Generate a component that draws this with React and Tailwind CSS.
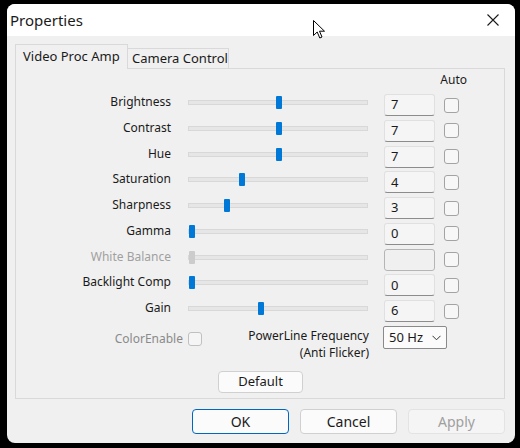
import { useState } from 'react'

const controles = [
  { nombre: 'Brightness', valor: '7', pos: 0.5 },
  { nombre: 'Contrast', valor: '7', pos: 0.5 },
  { nombre: 'Hue', valor: '7', pos: 0.5 },
  { nombre: 'Saturation', valor: '4', pos: 0.287 },
  { nombre: 'Sharpness', valor: '3', pos: 0.2 },
  { nombre: 'Gamma', valor: '0', pos: 0 },
  { nombre: 'White Balance', valor: '', pos: 0, disabled: true },
  { nombre: 'Backlight Comp', valor: '0', pos: 0 },
  { nombre: 'Gain', valor: '6', pos: 0.4 },
]

function Checkbox({ className = '' }) {
  return (
    <div className={`w-[15px] h-[15px] rounded-[3px] border border-[#a3a3a3] bg-[#f7f7f7] ${className}`}></div>
  )
}

function Fila({ control }) {
  const { nombre, valor, pos, disabled } = control
  return (
    <div className="flex items-center h-[22px]">
      <div className={`w-[155px] text-right text-[12px] leading-[16px] mb-[6px] ${disabled ? 'text-[#a0a0a0]' : 'text-[#1a1a1a]'}`}>
        {nombre}
      </div>
      <div className="ml-[17px] w-[180px] mb-[5px] relative h-[5px] bg-[#e6e6e6] border border-[#d8d8d8]">
        <div
          className={`absolute top-[-5px] w-[6px] h-[13px] rounded-[1px] ${disabled ? 'bg-[#cccccc]' : 'bg-[#0078d7]'}`}
          style={{ left: `${pos * 173}px` }}
        ></div>
      </div>
      <div
        className={`ml-[16px] w-[51px] h-[22px] rounded-[3px] pl-[6px] flex items-center text-[13px] text-[#1a1a1a] ${
          disabled ? 'border border-[#b5b5b5] bg-[#f0f0f0]' : 'border border-[#e0e0e0] border-b-[#8c8c8c] bg-[#f5f5f5]'
        }`}
      >
        {valor}
      </div>
      <Checkbox className="ml-[9px]" />
    </div>
  )
}

export default function App() {
  const [tab] = useState('video')

  return (
    <div
      className="w-[520px] h-[448px] bg-black pt-[4px] pl-[7px]"
      style={{ fontFamily: '"Noto Sans", "Open Sans", sans-serif' }}
    >
      <div className="relative w-[508px] h-[439px] rounded-[8px] bg-[#f0f0f0] overflow-hidden flex flex-col">
        {/* barra de titulo */}
        <div className="h-[32px] bg-white flex items-center justify-between pl-[3px] pr-[16px]">
          <span className="text-[15px] text-[#1a1a1a]">Properties</span>
          <svg width="12" height="12" viewBox="0 0 12 12">
            <path d="M0.5 0.5 L11.5 11.5 M11.5 0.5 L0.5 11.5" stroke="#1a1a1a" strokeWidth="1.1" />
          </svg>
        </div>

        <div className="flex-1 pl-[8px] pr-[10px] pt-[8px]">
          {/* pestañas */}
          <div className="flex items-end h-[24px]">
            <div
              className={`relative z-10 -mb-px w-[113px] h-[25px] border border-b-0 border-[#d9d9d9] bg-[#f0f0f0] text-[13px] text-[#1a1a1a] pl-[7px] pt-[2px] ${
                tab === 'video' ? '' : ''
              }`}
            >
              Video Proc Amp
            </div>
            <div className="w-[101px] h-[20px] border border-l-0 border-b-0 border-[#d9d9d9] bg-[#f0f0f0] text-[13px] text-[#1a1a1a] pl-[4px] leading-[19px]">
              Camera Control
            </div>
          </div>

          {/* panel */}
          <div className="w-[490px] h-[331px] border border-[#d9d9d9] bg-[#f0f0f0] flex flex-col">
            <div className="pt-[3px] h-[19px] flex justify-end pr-[37px] text-[12px] leading-[16px] text-[#1a1a1a]">
              Auto
            </div>
            <div className="mt-[6px] flex flex-col gap-[3.75px]">
              {controles.map((c) => (
                <Fila key={c.nombre} control={c} />
              ))}
            </div>

            <div className="flex items-start mt-[4px]">
              <div className="w-[186px] flex justify-end items-center gap-[5px] pt-[6px]">
                <span className="text-[12px] leading-[14px] text-[#8a8a8a]">ColorEnable</span>
                <div className="w-[14px] h-[14px] rounded-[3px] border border-[#c0c0c0] bg-[#f5f5f5]"></div>
              </div>
              <div className="w-[167px] text-right text-[12px] leading-[16.5px] text-[#1a1a1a] pt-[2px]">
                <div>PowerLine Frequency</div>
                <div>(Anti Flicker)</div>
              </div>
              <div className="ml-[14px] w-[64px] h-[23px] rounded-[2px] border border-[#8a8a8a] bg-[#fbfbfb] flex items-center justify-between pl-[5px] pr-[5px] text-[13px] text-[#1a1a1a]">
                <span>50 Hz</span>
                <svg width="9" height="6" viewBox="0 0 9 6">
                  <path d="M0.5 0.8 L4.5 4.8 L8.5 0.8" fill="none" stroke="#333" strokeWidth="1" />
                </svg>
              </div>
            </div>

            <div className="mt-[10px] ml-[202px] w-[85px] h-[22px] rounded-[4px] border border-[#d0d0d0] bg-[#fbfbfb] flex items-center justify-center text-[13px] text-[#1a1a1a]">
              Default
            </div>
          </div>

          {/* botones */}
          <div className="flex justify-end gap-[11px] mt-[10px]">
            <button className="w-[97px] h-[25px] rounded-[4px] border border-[#0067c0] bg-[#fbfbfb] text-[14px] text-[#1a1a1a]">
              OK
            </button>
            <button className="w-[97px] h-[25px] rounded-[4px] border border-[#d0d0d0] bg-[#fbfbfb] text-[14px] text-[#1a1a1a]">
              Cancel
            </button>
            <button className="w-[97px] h-[25px] rounded-[4px] border border-[#e3e3e3] bg-[#f5f5f5] text-[14px] text-[#a0a0a0]">
              Apply
            </button>
          </div>
        </div>

        {/* cursor */}
        <svg className="absolute left-[306px] top-[16px]" width="14" height="20" viewBox="0 0 14 20">
          <path
            d="M0.5 0.5 L0.5 15.5 L4.2 12 L6.8 18 L9 17 L6.5 11.2 L11.5 11.2 Z"
            fill="white"
            stroke="black"
            strokeWidth="1"
            strokeLinejoin="round"
          />
        </svg>
      </div>
    </div>
  )
}
